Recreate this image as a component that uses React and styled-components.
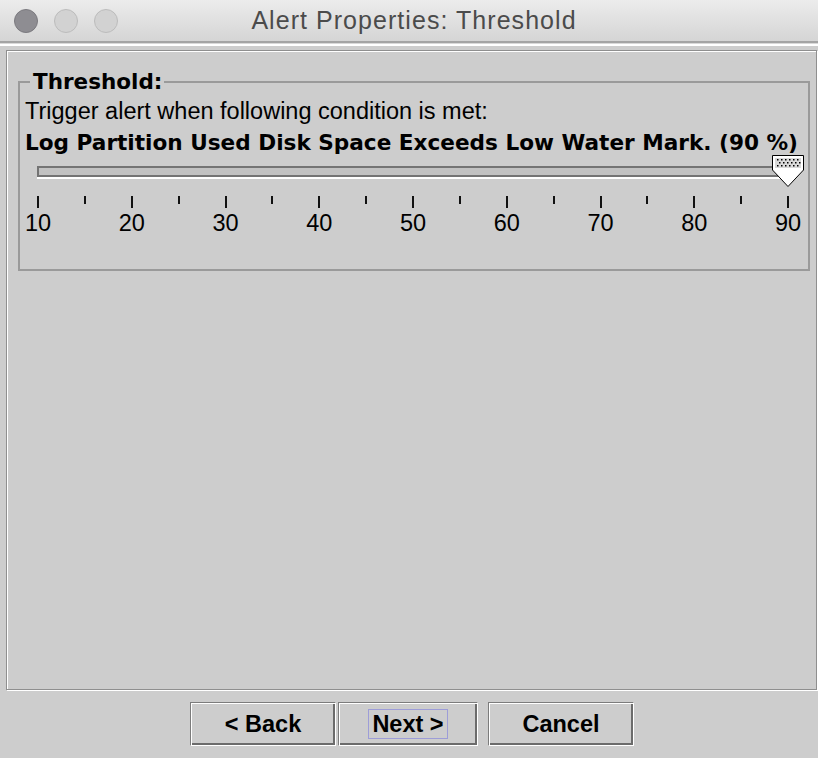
import styled, { createGlobalStyle } from 'styled-components'

const GlobalStyle = createGlobalStyle`
  html, body {
    margin: 0;
    padding: 0;
    background: #cdcdcd;
  }
`
const Window = styled.div`
  width: 818px;
  height: 758px;
  display: flex;
  flex-direction: column;
  background: #cdcdcd;
  overflow: hidden;
`
const TitleBar = styled.div`
  flex: none;
  height: 41px;
  display: grid;
  grid-template-columns: 1fr auto 1fr;
  align-items: center;
  padding-left: 10px;
  background: linear-gradient(#ececec, #d5d5d5);
  border-bottom: 2px solid #a4a4a4;
`
const Lights = styled.div`
  display: flex;
  gap: 16px;
  margin-left: 4px;
`
const Light = styled.span`
  width: 24px;
  height: 24px;
  box-sizing: border-box;
  border-radius: 50%;
  background: ${(props) => (props.$active ? '#8e8d92' : '#d2d2d2')};
  border: 1px solid ${(props) => (props.$active ? '#7b7a7f' : '#bcbcbc')};
`
const Title = styled.div`
  font-family: 'Liberation Sans', Arial, sans-serif;
  font-size: 25px;
  letter-spacing: 1.05px;
  color: #4b4b4b;
  white-space: nowrap;
`
const Strip = styled.div`
  flex: none;
  height: 1px;
  background: #d9d9d9;
  border-bottom: 2px solid #ffffff;
`
const Panel = styled.div`
  flex: none;
  box-sizing: border-box;
  height: 640px;
  margin: 4px 1px 0 6px;
  padding: 19px 6px 0 11px;
  border: 1px solid #8f8f8f;
  box-shadow: inset 1px 1px 0 #fff, 1px 1px 0 #fff;
`
const Group = styled.fieldset`
  box-sizing: border-box;
  width: 792px;
  height: 201px;
  margin: 0;
  padding: 0 5px;
  border: 2px solid #9a9a9a;
`
const Legend = styled.legend`
  margin-left: 5px;
  padding: 0 2px 0 3px;
  font-family: 'DejaVu Sans', Verdana, sans-serif;
  font-weight: bold;
  font-size: 21.5px;
  line-height: 24px;
  color: #000;
`
const Plain = styled.div`
  margin-top: 4px;
  font-family: 'Liberation Sans', Arial, sans-serif;
  font-size: 23.5px;
  line-height: 26px;
  color: #000;
  white-space: nowrap;
`
const Strong = styled.div`
  margin-top: 6px;
  font-family: 'DejaVu Sans', Verdana, sans-serif;
  font-weight: bold;
  font-size: 21.6px;
  line-height: 25px;
  color: #000;
  white-space: nowrap;
`
const SliderWrap = styled.div`
  position: relative;
  width: 752px;
  margin: 11px 0 0 12px;
`
const Track = styled.div`
  box-sizing: border-box;
  height: 11px;
  border: 2px solid #747474;
  background: #c2c2c2;
  box-shadow: 0 2px 0 #fff;
`
const TickRow = styled.div`
  display: flex;
  justify-content: space-between;
  align-items: flex-start;
  height: 12px;
  margin-top: 19px;
`
const Tick = styled.span`
  width: 2px;
  height: ${(props) => (props.$major ? '12px' : '8px')};
  background: #111;
`
const LabelRow = styled.div`
  display: flex;
  justify-content: space-between;
  padding: 0 1px;
  margin-top: 2px;
`
const Label = styled.span`
  width: 0;
  display: flex;
  justify-content: center;
  white-space: nowrap;
  font-family: 'Liberation Sans', Arial, sans-serif;
  font-size: 23.5px;
  line-height: 26px;
  color: #000;
`
const Thumb = styled.svg`
  position: absolute;
  top: -11px;
  width: 32px;
  height: 33px;
`
const ButtonRow = styled.div`
  display: flex;
  justify-content: center;
  padding-left: 6px;
  margin-top: 12px;
`
const Button = styled.button`
  box-sizing: border-box;
  width: ${(props) => props.$width}px;
  height: 44px;
  margin-left: ${(props) => props.$gap || 0}px;
  padding: 0;
  display: flex;
  align-items: center;
  justify-content: center;
  background: #cdcdcd;
  border: 1px solid;
  border-color: #7c7c7c #fff #fff #7c7c7c;
  box-shadow: inset 1px 1px 0 #fff, inset -2px -2px 0 #6b6b6b;
  font-family: 'Liberation Sans', Arial, sans-serif;
  font-weight: bold;
  font-size: 23.5px;
  color: #000;
`
const Focus = styled.span`
  padding: 0 3px;
  line-height: 28px;
  border: 1px solid #9d9dd8;
`

const MIN = 10
const MAX = 90
const value = 90
const ticks = Array.from({ length: 17 }, (_, i) => i % 2 === 0)
const labels = [10, 20, 30, 40, 50, 60, 70, 80, 90]

function ThumbIcon({ left }) {
  const dots = []
  for (let r = 0; r < 3; r++) {
    for (let c = 0; c < 6; c++) {
      dots.push(<rect key={r + '-' + c} x={5 + c * 4 + (r % 2) * 2} y={4 + r * 3} width="1.5" height="1.5" fill="#000" />)
    }
  }
  return (
    <Thumb viewBox="0 0 32 33" style={{ left }}>
      <polygon points="0.5,0.5 31.5,0.5 31.5,15 16,31.5 0.5,15" fill="#fff" stroke="#000" />
      <rect x="3" y="3" width="26" height="10" fill="#d9d9d9" />
      {dots}
    </Thumb>
  )
}

export default function App() {
  const left = ((value - MIN) / (MAX - MIN)) * 750 + 1 - 16
  return (
    <Window>
      <GlobalStyle />
      <TitleBar>
        <Lights>
          <Light $active />
          <Light />
          <Light />
        </Lights>
        <Title>Alert Properties: Threshold</Title>
        <div />
      </TitleBar>
      <Strip />
      <Panel>
        <Group>
          <Legend>Threshold:</Legend>
          <Plain>Trigger alert when following condition is met:</Plain>
          <Strong>Log Partition Used Disk Space Exceeds Low Water Mark. (90 %)</Strong>
          <SliderWrap>
            <Track />
            <TickRow>
              {ticks.map((major, i) => (
                <Tick key={i} $major={major} />
              ))}
            </TickRow>
            <LabelRow>
              {labels.map((l) => (
                <Label key={l}>{l}</Label>
              ))}
            </LabelRow>
            <ThumbIcon left={left} />
          </SliderWrap>
        </Group>
      </Panel>
      <ButtonRow>
        <Button $width={146}>&lt; Back</Button>
        <Button $width={140} $gap={2}>
          <Focus>Next &gt;</Focus>
        </Button>
        <Button $width={146} $gap={10}>Cancel</Button>
      </ButtonRow>
    </Window>
  )
}
